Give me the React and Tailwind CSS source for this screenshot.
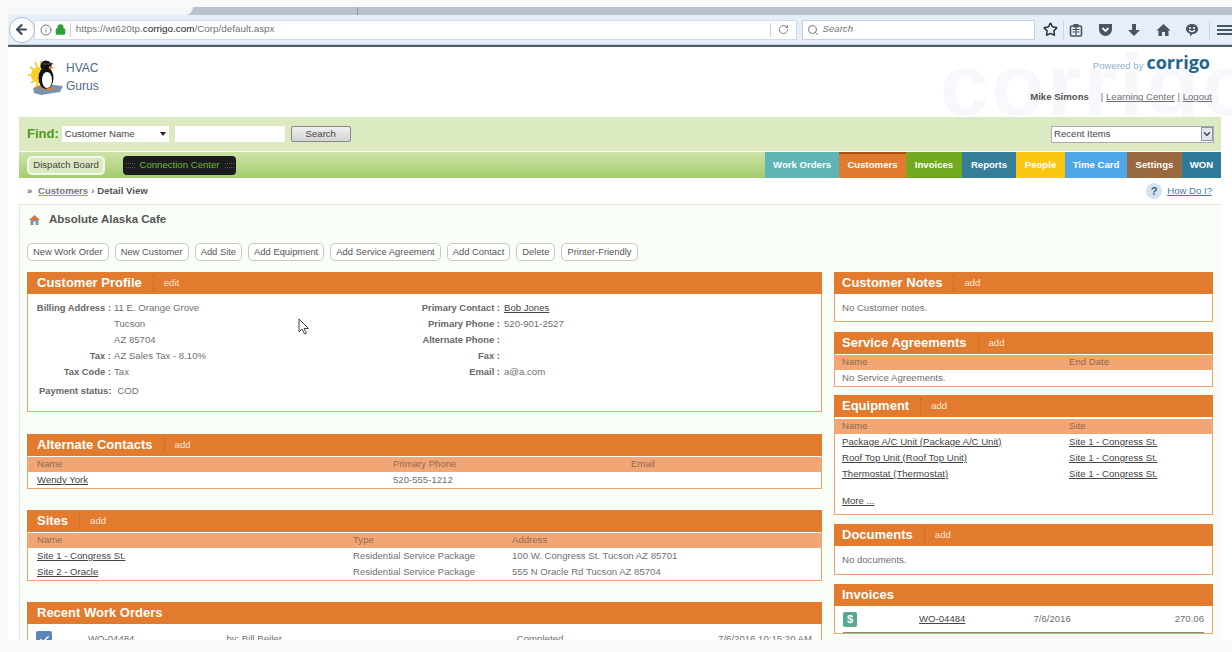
import React from 'react'
import { ArrowLeft, Info, Lock, RotateCw, Search, Star, ChevronDown, Check } from 'lucide-react'

const tabs = [
  { label: 'Work Orders', cls: 'w-[74px] bg-[#5fb4b6]' },
  { label: 'Customers', cls: 'w-[67px] bg-[#e07a2e] shadow-[inset_0_2px_0_#a9521a]' },
  { label: 'Invoices', cls: 'w-[56px] bg-[#72a91e]' },
  { label: 'Reports', cls: 'w-[54px] bg-[#367d9a]' },
  { label: 'People', cls: 'w-[49px] bg-[#fbc712] text-[#f6efc6]' },
  { label: 'Time Card', cls: 'w-[62px] bg-[#4ea7e6]' },
  { label: 'Settings', cls: 'w-[55px] bg-[#98683f]' },
  { label: 'WON', cls: 'w-[39px] bg-[#2f7a98]' },
]

const actions = [
  'New Work Order',
  'New Customer',
  'Add Site',
  'Add Equipment',
  'Add Service Agreement',
  'Add Contact',
  'Delete',
  'Printer-Friendly',
]

function Penguin() {
  return (
    <svg width="38" height="36" viewBox="0 0 38 36">
      <g stroke="#f5c518" strokeWidth="1.6">
        <path d="M14 16L1 16M14 16L3 8M14 16L4 24M14 16L8 3M14 16L9 28M14 16L14 2" />
      </g>
      <circle cx="12" cy="16" r="8" fill="#f9cf2a" />
      <path d="M6 29L18 25L36 27L33 33L14 36L7 34Z" fill="#7d93ad" />
      <ellipse cx="19" cy="19" rx="7.5" ry="11" fill="#111" />
      <ellipse cx="20" cy="21" rx="5" ry="8" fill="#fff" />
      <circle cx="19" cy="7" r="5.5" fill="#111" />
      <path d="M22 7L28 9L22 10Z" fill="#e98a1e" />
      <path d="M12 26L8 29L15 30ZM22 28L18 31L27 31Z" fill="#e07b1c" />
      <path d="M14 4L26 4L25 6L15 6Z" fill="#333" />
    </svg>
  )
}

function Panel({ title, action, className, pad = 'pl-[10px]', children }) {
  return (
    <div className={`border border-t-0 border-[#eea26c] bg-white ${className}`}>
      <div className={`flex items-center h-[22px] bg-[#e27b2e] -mx-px ${pad}`}>
        <span className="text-[13px] font-bold text-white">{title}</span>
        {action && <span className="h-[16px] ml-[11px] border-l border-dotted border-[#b9662a]"></span>}
        {action && <span className="ml-[10px] text-[9.6px] text-[#fbe6d4]">{action}</span>}
      </div>
      {children}
    </div>
  )
}

function TableHead({ cols, pad = 'pl-[10px]', children }) {
  return (
    <div className={`grid ${cols} h-[15px] mt-px -mx-px ${pad} items-center bg-[#f2a676] text-[#8f6a50]`}>
      {children}
    </div>
  )
}

function Row({ cols, pad = 'pl-[9px]', children }) {
  return <div className={`grid ${cols} h-[16px] ${pad} items-center text-[#707070]`}>{children}</div>
}

function Link({ children }) {
  return <span className="text-[#444] underline">{children}</span>
}

function Label({ children }) {
  return <span className="text-right text-[9.4px] font-bold whitespace-nowrap text-[#666] pr-[3px]">{children}</span>
}

function App() {
  return (
    <div className="w-[1232px] h-[652px] overflow-hidden bg-[#f9f9f8] font-['Liberation_Sans',Arial,sans-serif] text-[9.6px] text-[#707070]">
      <div className="h-[640px] pt-[7px] pl-[8px] overflow-hidden">
        {/* browser chrome */}
        <div className="h-[8px] bg-[#b9c3cf] flex">
          <div className="w-[185px] h-[8px] bg-[#f3f5f7] rounded-br-[10px]"></div>
          <div className="w-[165px] border-r border-[#8c98a8]"></div>
        </div>
        <div className="flex items-center h-[30px] bg-[#e6eff9] border-b border-[#bcd0e6]">
          <div className="flex items-center justify-center w-[26px] h-[26px] ml-[1px] rounded-full bg-white border border-[#a9bdd6] text-[#3f4c5c] z-10">
            <ArrowLeft size={15} strokeWidth={3.5} />
          </div>
          <div className="flex items-center w-[768px] h-[20px] -ml-[1px] bg-white border border-[#cfdbe8] pl-[5px] text-[9.9px] text-[#737373]">
            <Info size={12} className="text-[#777]" />
            <Lock size={11} strokeWidth={3} className="ml-[3px] fill-[#2e9e38] text-[#2e9e38]" />
            <span className="h-[14px] ml-[4px] border-l border-[#ccc]"></span>
            <span className="ml-[5px]">https://wt620tp.<span className="text-[#222]">corrigo.com</span>/Corp/default.aspx</span>
            <span className="h-[14px] ml-auto border-l border-[#ccc]"></span>
            <RotateCw size={11} className="mx-[7px] text-[#777]" />
          </div>
          <div className="flex items-center w-[235px] h-[20px] ml-[5px] bg-white border border-[#c3d2e3] pl-[4px] italic text-[#777]">
            <Search size={12} className="mr-[4px] text-[#777]" />
            Search
          </div>
          <div className="flex items-center ml-[8px] text-[#4a5563]">
            <Star size={15} strokeWidth={2.4} className="text-[#333]" />
            <span className="h-[18px] ml-[5px] border-l border-[#cbd6e2]"></span>
            <svg width="14" height="14" viewBox="0 0 14 14" className="ml-[5px]">
              <rect x="1.5" y="3" width="11" height="10" rx="1" fill="none" stroke="#4a5563" strokeWidth="1.6" />
              <path d="M5 1.5H9V4H5ZM3.5 6.5H10.5M3.5 9H10.5M7 4V12" stroke="#4a5563" strokeWidth="1.2" fill="#4a5563" />
            </svg>
            <svg width="15" height="14" viewBox="0 0 15 14" className="ml-[15px]">
              <path d="M1 1H14V6C14 10 11 13 7.5 13C4 13 1 10 1 6Z" fill="#4a5563" />
              <path d="M4.5 5L7.5 8L10.5 5" fill="none" stroke="#fff" strokeWidth="1.8" />
            </svg>
            <svg width="14" height="14" viewBox="0 0 14 14" className="ml-[14px]">
              <path d="M5 1H9V7H13L7 13L1 7H5Z" fill="#4a5563" />
            </svg>
            <svg width="15" height="14" viewBox="0 0 15 14" className="ml-[15px]">
              <path d="M7.5 1L14.5 7.5H12.5V13H9V9H6V13H2.5V7.5H0.5Z" fill="#4a5563" />
            </svg>
            <svg width="14" height="14" viewBox="0 0 14 14" className="ml-[14px]">
              <path d="M7 1C10.5 1 13 3.2 13 6.2C13 9 10.5 11 7.5 11L5 13.5V10.7C2.8 10 1 8.5 1 6.2C1 3.2 3.5 1 7 1Z" fill="#4a5563" />
              <circle cx="5" cy="5" r="1" fill="#fff" /><circle cx="9" cy="5" r="1" fill="#fff" />
              <path d="M4 7.2C5.5 9 8.5 9 10 7.2" fill="none" stroke="#fff" strokeWidth="1.2" />
            </svg>
            <span className="h-[18px] ml-[10px] border-l border-[#cbd6e2]"></span>
            <div className="flex flex-col gap-[2px] ml-[7px] shrink-0">
              <span className="block w-[15px] h-[2px] bg-[#4a5563]"></span>
              <span className="block w-[15px] h-[2px] bg-[#4a5563]"></span>
              <span className="block w-[15px] h-[2px] bg-[#4a5563]"></span>
            </div>
          </div>
        </div>
        <div className="h-[2px] bg-[#55595e]"></div>

        {/* page header */}
        <div className="relative h-[70px] bg-white overflow-hidden">
          <span className="absolute left-[932px] top-[-28px] text-[88px] font-bold tracking-[2px] whitespace-nowrap text-[#f6f8fb]">corrigo</span>
          <div className="relative flex pl-[19px] pt-[12px] pr-[20px]">
            <Penguin />
            <div className="ml-[1px] text-[12px] leading-[18px] text-[#4d6a8a]">
              <div>HVAC</div>
              <div>Gurus</div>
            </div>
            <div className="ml-auto -mt-[6px] flex flex-col items-end">
              <div className="flex items-baseline mr-[2px]">
                <span className="text-[#8db0cf]">Powered by</span>
                <span className="ml-[3px] font-['Open_Sans'] text-[18px] leading-[18px] font-bold text-[#22658f]">corrigo</span>
              </div>
              <div className="mt-[17px] flex">
                <span className="font-bold text-[#555] mr-[12px]">Mike Simons</span>
                <span>| <span className="underline">Learning Center</span> | <span className="underline">Logout</span></span>
              </div>
            </div>
          </div>
        </div>

        <div className="bg-white pl-[11px] pr-[11px]">
          {/* find bar */}
          <div className="flex items-center h-[34px] bg-[#dceac2] pl-[8px] pr-[7px]">
            <span className="text-[13px] font-bold text-[#4f9a1c]">Find:</span>
            <div className="flex items-center justify-between w-[107px] h-[16px] ml-[3px] px-[3px] bg-white text-[#444]">
              Customer Name
              <span className="w-0 h-0 border-x-[3px] border-t-[4px] border-x-transparent border-t-[#222]"></span>
            </div>
            <div className="w-[110px] h-[16px] ml-[6px] bg-white"></div>
            <div className="flex items-center justify-center w-[60px] h-[16px] ml-[6px] bg-gradient-to-b from-[#f0f0f0] to-[#d4d4d4] border border-[#888] rounded-[2px] text-[#444]">Search</div>
            <div className="flex items-center justify-between w-[163px] h-[17px] ml-auto pl-[2px] bg-white border border-[#aab] text-[#444]">
              Recent Items
              <span className="flex items-center justify-center w-[12px] h-[14px] bg-[#dfe6ee] border border-[#8a98a8]">
                <ChevronDown size={10} strokeWidth={3.5} className="text-[#444]" />
              </span>
            </div>
          </div>

          {/* nav bar */}
          <div className="flex items-center h-[26px] mt-px bg-gradient-to-b from-[#cfe3a8] to-[#a3cb6c] pl-[8px]">
            <div className="flex items-center justify-center w-[78px] h-[19px] border-2 border-[#f3f8e8] rounded-[5px] bg-[#dbe9c2] text-[#444]">Dispatch Board</div>
            <div className="flex items-center justify-center w-[113px] h-[19px] ml-[18px] rounded-[4px] bg-[#1c1c1c] text-[#6fb83a]">
              <span className="w-[9px] h-[5px] mr-[5px] border-y border-dotted border-[#555]"></span>
              Connection Center
              <span className="w-[9px] h-[5px] ml-[5px] border-y border-dotted border-[#555]"></span>
            </div>
            <div className="flex h-full ml-auto">
              {tabs.map(tab => (
                <div key={tab.label} className={`flex items-center justify-center text-[9.6px] font-bold text-white ${tab.cls}`}>{tab.label}</div>
              ))}
            </div>
          </div>

          {/* breadcrumb */}
          <div className="flex items-center h-[26px] pl-[8px] pr-[9px]">
            <span className="w-[8px] font-bold">»</span>
            <span className="ml-[3px] font-bold text-[#777] underline decoration-[#a8a24c]">Customers</span>
            <span className="mx-[3px] font-bold">›</span>
            <span className="font-bold text-[#555]">Detail View</span>
            <span className="flex items-center justify-center w-[16px] h-[16px] ml-auto rounded-full bg-[#d5e3f1] text-[11px] font-bold text-[#3a5d80]">?</span>
            <span className="ml-[5px] text-[#3b7ea8] underline">How Do I?</span>
          </div>

          {/* detail card */}
          <div className="bg-[#f8fdf5] border-t border-l border-[#e3e6df] h-[450px] pl-[7px] overflow-hidden">
            <div className="flex items-center h-[28px] pt-[1px]">
              <svg width="13" height="12" viewBox="0 0 13 12" className="ml-[1px]">
                <path d="M1 6L6.5 1L12 6Z" fill="#d9713a" />
                <rect x="2.5" y="6" width="8" height="5" fill="#7f93a8" />
                <rect x="5.5" y="7.5" width="2" height="3.5" fill="#fff" />
              </svg>
              <span className="ml-[8px] text-[11.5px] font-bold text-[#555]">Absolute Alaska Cafe</span>
            </div>
            <div className="flex gap-[6px] mt-[10px] text-[9.4px]">
              {actions.map(a => (
                <div key={a} className="flex items-center h-[18px] px-[5px] bg-white border border-[#c5c8c5] rounded-[5px] text-[#555]">{a}</div>
              ))}
            </div>

            <div className="flex gap-[12px] mt-[11px]">
              {/* left column */}
              <div className="w-[795px] shrink-0">
                <Panel title="Customer Profile" action="edit" className="relative h-[140px]">
                  <div className="grid grid-cols-[86px_300px_89px_1fr] pt-[6px] leading-[16px]">
                    <Label>Billing Address :</Label><span>11 E. Orange Grove</span><Label>Primary Contact :</Label><span className="pl-[1px]"><Link>Bob Jones</Link></span>
                    <span></span><span>Tucson</span><Label>Primary Phone :</Label><span className="pl-[1px]">520-901-2527</span>
                    <span></span><span>AZ 85704</span><Label>Alternate Phone :</Label><span></span>
                    <Label>Tax :</Label><span>AZ Sales Tax - 8.10%</span><Label>Fax :</Label><span></span>
                    <Label>Tax Code :</Label><span>Tax</span><Label>Email :</Label><span className="pl-[1px]">a@a.com</span>
                  </div>
                  <div className="flex pl-[11px] pt-[4px]">
                    <span className="text-[9.4px] font-bold text-[#666]">Payment status:</span>
                    <span className="ml-[6px]">COD</span>
                  </div>
                  <svg width="12" height="18" viewBox="0 0 12 18" className="absolute left-[270px] top-[46px]">
                    <path d="M1 1V14L4 11L6.5 16L8.5 15L6 10.5L10.5 10.5Z" fill="#fff" stroke="#444" strokeWidth="1" />
                  </svg>
                </Panel>

                <Panel title="Alternate Contacts" action="add" className="mt-[22px]">
                  <TableHead cols="grid-cols-[356px_238px_1fr]">
                    <span>Name</span><span>Primary Phone</span><span>Email</span>
                  </TableHead>
                  <Row cols="grid-cols-[356px_238px_1fr]">
                    <Link>Wendy York</Link><span>520-555-1212</span><span></span>
                  </Row>
                </Panel>

                <Panel title="Sites" action="add" className="mt-[21px]">
                  <TableHead cols="grid-cols-[316px_159px_1fr]">
                    <span>Name</span><span>Type</span><span>Address</span>
                  </TableHead>
                  <Row cols="grid-cols-[316px_159px_1fr]">
                    <Link>Site 1 - Congress St.</Link><span>Residential Service Package</span><span>100 W. Congress St. Tucson AZ 85701</span>
                  </Row>
                  <Row cols="grid-cols-[316px_159px_1fr]">
                    <Link>Site 2 - Oracle</Link><span>Residential Service Package</span><span>555 N Oracle Rd Tucson AZ 85704</span>
                  </Row>
                </Panel>

                <Panel title="Recent Work Orders" className="mt-[21px]">
                  <div className="flex items-center h-[30px] pl-[8px] pr-[9px] text-[#707070]">
                    <span className="flex items-center justify-center w-[16px] h-[16px] rounded-[2px] bg-[#5b86b8] text-white">
                      <Check size={11} strokeWidth={3} />
                    </span>
                    <span className="ml-[36px]">WO-04484</span>
                    <span className="ml-[92px]">by: Bill Beiler</span>
                    <span className="ml-[235px]">Completed</span>
                    <span className="ml-auto">7/6/2016 10:15:20 AM</span>
                  </div>
                </Panel>
              </div>

              {/* right column */}
              <div className="w-[379px] shrink-0">
                <Panel title="Customer Notes" action="add" pad="pl-[8px]" className="h-[50px]">
                  <div className="pl-[7px] pt-[7px]">No Customer notes.</div>
                </Panel>

                <Panel title="Service Agreements" action="add" pad="pl-[8px]" className="mt-[10px]">
                  <TableHead cols="grid-cols-[227px_1fr]" pad="pl-[8px]">
                    <span>Name</span><span>End Date</span>
                  </TableHead>
                  <Row cols="grid-cols-[227px_1fr]" pad="pl-[7px]">
                    <span>No Service Agreements.</span><span></span>
                  </Row>
                </Panel>

                <Panel title="Equipment" action="add" pad="pl-[8px]" className="mt-[8px] h-[120px]">
                  <div className="h-px"></div>
                  <TableHead cols="grid-cols-[227px_1fr]" pad="pl-[8px]">
                    <span>Name</span><span>Site</span>
                  </TableHead>
                  <Row cols="grid-cols-[227px_1fr]" pad="pl-[7px]">
                    <Link>Package A/C Unit (Package A/C Unit)</Link><Link>Site 1 - Congress St.</Link>
                  </Row>
                  <Row cols="grid-cols-[227px_1fr]" pad="pl-[7px]">
                    <Link>Roof Top Unit (Roof Top Unit)</Link><Link>Site 1 - Congress St.</Link>
                  </Row>
                  <Row cols="grid-cols-[227px_1fr]" pad="pl-[7px]">
                    <Link>Thermostat (Thermostat)</Link><Link>Site 1 - Congress St.</Link>
                  </Row>
                  <div className="pl-[7px] pt-[12px]"><Link>More ...</Link></div>
                </Panel>

                <Panel title="Documents" action="add" pad="pl-[8px]" className="mt-[9px] h-[51px]">
                  <div className="pl-[7px] pt-[7px]">No documents.</div>
                </Panel>

                <Panel title="Invoices" pad="pl-[8px]" className="mt-[9px]">
                  <div className="flex items-center h-[27px] mx-[8px] border-b border-[#888]">
                    <span className="flex items-center justify-center w-[14px] h-[15px] rounded-[2px] bg-[#5aa88e] text-[11px] font-bold text-white">$</span>
                    <span className="ml-[62px]"><Link>WO-04484</Link></span>
                    <span className="ml-[68px]">7/6/2016</span>
                    <span className="ml-auto">270.06</span>
                  </div>
                </Panel>
              </div>
            </div>
          </div>
        </div>
      </div>
    </div>
  )
}

export default App
